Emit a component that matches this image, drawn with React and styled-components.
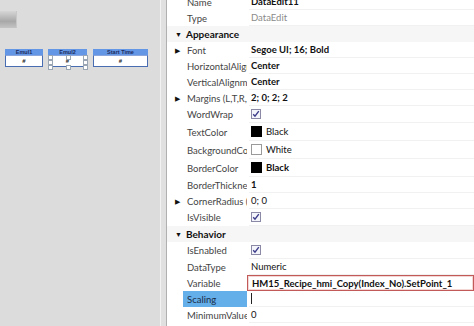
import React from "react";
import styled, { createGlobalStyle, css } from "styled-components";

const Global = createGlobalStyle`
  html, body { margin: 0; padding: 0; background: #fff; }
  body { font-family: Lato, "Open Sans", sans-serif; }
  * { box-sizing: border-box; }
`;

const Page = styled.div`
  width: 474px;
  height: 326px;
  display: flex;
  overflow: hidden;
`;

const Canvas = styled.div`
  width: 160px;
  flex: none;
  background: #dcdcdc;
  display: flex;
  flex-direction: column;
`;

const ToolButton = styled.div`
  margin-top: 11px;
  width: 17px;
  height: 17px;
  background: linear-gradient(#d6d6d6 0%, #b4b4b4 45%, #a8a8a8 60%, #c4c4c4 100%);
  border-right: 1px solid #c8c8c8;
`;

const WidgetRow = styled.div`
  margin-top: 21px;
  padding-left: 5px;
  display: flex;
  gap: 5px;
`;

const Widget = styled.div`
  position: relative;
  width: ${(p) => p.$w}px;
  margin-left: ${(p) => p.$ml || 0}px;
  display: flex;
  flex-direction: column;
`;

const WidgetHead = styled.div`
  height: 6px;
  background: #6496e6;
  color: #1c2c5c;
  font-family: "Liberation Sans", Arial, sans-serif;
  font-weight: bold;
  font-size: 5.5px;
  line-height: 6px;
  text-align: center;
`;

const WidgetValue = styled.div`
  height: 12px;
  background: #fff;
  border: 1px solid #4a6cb0;
  border-top-color: #8aa6dc;
  color: #222;
  font-family: "Liberation Sans", Arial, sans-serif;
  font-weight: bold;
  font-size: 6px;
  line-height: 10px;
  text-align: center;
`;

const Handle = styled.span`
  position: absolute;
  width: 5px;
  height: 5px;
  background: #fff;
  border: 1px solid #9aa6b4;
  left: ${(p) => p.$x}px;
  top: ${(p) => p.$y}px;
`;

const Splitter = styled.div`
  width: 7px;
  flex: none;
  background: #e0e0e0;
  border-left: 1px solid #f2f2f2;
  border-right: 1px solid #b0b0b0;
`;

const Grid = styled.div`
  flex: 1;
  background: #fff;
  overflow: hidden;
  display: flex;
  flex-direction: column;
  margin-top: -6px;
  font-size: 9.5px;
  color: #444;
`;

const Row = styled.div`
  display: grid;
  grid-template-columns: 82px 1fr;
  height: ${(p) => p.$h || 16}px;
  flex: none;
  ${(p) =>
    p.$cat &&
    css`
      background: #f6f6f6;
    `}
`;

const NameCell = styled.div`
  position: relative;
  display: flex;
  align-items: center;
  padding-left: ${(p) => (p.$cat ? 19 : 16)}px;
  overflow: hidden;
  white-space: nowrap;
  ${(p) =>
    p.$cat &&
    css`
      font-weight: bold;
      font-size: 10px;
      color: #111;
    `}
`;

const Arrow = styled.span`
  position: absolute;
  left: 8px;
  top: 50%;
  transform: translateY(-50%);
  font-size: 7px;
  color: #111;
  line-height: 1;
`;

const Label = styled.span`
  flex: 1;
  align-self: stretch;
  display: flex;
  align-items: center;
  padding-left: 4px;
  margin-right: 2px;
  overflow: hidden;
  ${(p) =>
    p.$selected &&
    css`
      background: #64aeea;
      color: #1a2c44;
    `}
`;

const ValueCell = styled.div`
  display: flex;
  align-items: center;
  gap: 4px;
  padding-left: 2px;
  overflow: hidden;
  white-space: nowrap;
  border-bottom: 1px solid #f1f1f1;
  color: ${(p) => (p.$muted ? "#8a8a8a" : "#111")};
  font-weight: ${(p) => (p.$bold ? "bold" : "normal")};
  ${(p) =>
    p.$edit &&
    css`
      margin-left: -2px;
      padding-left: 4px;
      border: 1px solid #c25a5a;
      box-shadow: inset 0 0 0 1px #f3d6d6;
      background: #fff;
    `}
`;

const Check = styled.span`
  width: 10px;
  height: 10px;
  border: 1px solid #8a8aa6;
  background: #f4f4fb;
  display: inline-flex;
  align-items: center;
  justify-content: center;
`;

const Swatch = styled.span`
  width: 11px;
  height: 11px;
  background: ${(p) => p.$c};
  border: 1px solid ${(p) => (p.$c === "#fff" ? "#9a9a9a" : "#000")};
`;

const Caret = styled.span`
  width: 1px;
  height: 11px;
  background: #222;
`;

const CheckBox = () => (
  <Check>
    <svg width="8" height="8" viewBox="0 0 8 8">
      <path d="M1.2 4.2 L3 6.2 L6.8 1.2" fill="none" stroke="#3b3b8a" strokeWidth="1.4" />
    </svg>
  </Check>
);

const rows = [
  { name: "Name", value: "DataEdit11", bold: true },
  { name: "Type", value: "DataEdit", muted: true },
  { cat: "Appearance" },
  { name: "Font", value: "Segoe UI; 16; Bold", bold: true, exp: true },
  { name: "HorizontalAlignment", value: "Center", bold: true },
  { name: "VerticalAlignment", value: "Center", bold: true },
  { name: "Margins (L,T,R,B)", value: "2; 0; 2; 2", bold: true, exp: true },
  { name: "WordWrap", check: true, h: 17 },
  { name: "TextColor", value: "Black", swatch: "#000", h: 18 },
  { name: "BackgroundColor", value: "White", swatch: "#fff", h: 18 },
  { name: "BorderColor", value: "Black", swatch: "#000", bold: true, h: 18 },
  { name: "BorderThickness", value: "1", bold: true },
  { name: "CornerRadius (X,Y)", value: "0; 0", exp: true },
  { name: "IsVisible", check: true, h: 17 },
  { cat: "Behavior" },
  { name: "IsEnabled", check: true, h: 17 },
  { name: "DataType", value: "Numeric" },
  { name: "Variable", value: "HM15_Recipe_hmi_Copy(Index_No).SetPoint_1", bold: true, edit: true },
  { name: "Scaling", selected: true, caret: true },
  { name: "MinimumValue", value: "0" },
];

export default function App() {
  return (
    <Page>
      <Global />
      <Canvas>
        <ToolButton />
        <WidgetRow>
          <Widget $w={38}>
            <WidgetHead>Emul1</WidgetHead>
            <WidgetValue>#</WidgetValue>
          </Widget>
          <Widget $w={39}>
            <WidgetHead>Emul2</WidgetHead>
            <WidgetValue>#</WidgetValue>
            <Handle $x={0} $y={6} />
            <Handle $x={0} $y={11} />
            <Handle $x={0} $y={16} />
            <Handle $x={18} $y={6} />
            <Handle $x={18} $y={16} />
            <Handle $x={35} $y={6} />
            <Handle $x={35} $y={11} />
            <Handle $x={35} $y={16} />
          </Widget>
          <Widget $w={55} $ml={1}>
            <WidgetHead>Start Time</WidgetHead>
            <WidgetValue>#</WidgetValue>
          </Widget>
        </WidgetRow>
      </Canvas>
      <Splitter />
      <Grid>
        {rows.map((r, i) =>
          r.cat ? (
            <Row key={i} $cat>
              <NameCell $cat>
                <Arrow>▼</Arrow>
                {r.cat}
              </NameCell>
              <div />
            </Row>
          ) : (
            <Row key={i} $h={r.h}>
              <NameCell>
                {r.exp && <Arrow>▶</Arrow>}
                <Label $selected={r.selected}>{r.name}</Label>
              </NameCell>
              <ValueCell $bold={r.bold} $muted={r.muted} $edit={r.edit}>
                {r.check && <CheckBox />}
                {r.swatch && <Swatch $c={r.swatch} />}
                {r.caret && <Caret />}
                {r.value}
              </ValueCell>
            </Row>
          )
        )}
      </Grid>
    </Page>
  );
}
